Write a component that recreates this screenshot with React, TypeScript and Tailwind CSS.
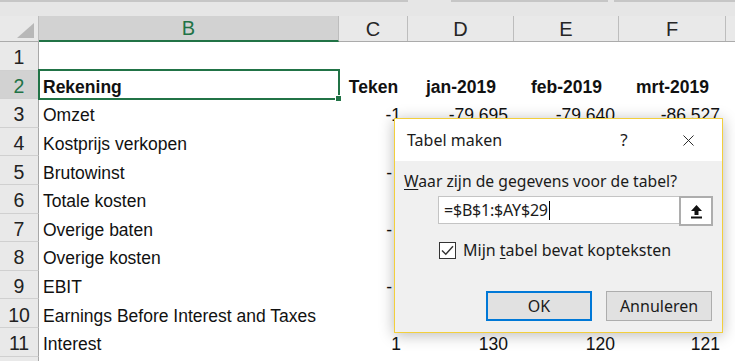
import { X } from 'lucide-react';

type RowData = {
  n: number;
  b: string;
  c?: string;
  d?: string;
  e?: string;
  f?: string;
  bold?: boolean;
};

// values under the dialog are left out: they cannot be seen anyway
const rows: RowData[] = [
  { n: 1, b: '' },
  { n: 2, b: 'Rekening', c: 'Teken', d: 'jan-2019', e: 'feb-2019', f: 'mrt-2019', bold: true },
  { n: 3, b: 'Omzet', c: '-1', d: '-79 695', e: '-79 640', f: '-86 527' },
  { n: 4, b: 'Kostprijs verkopen' },
  { n: 5, b: 'Brutowinst', c: '-' },
  { n: 6, b: 'Totale kosten' },
  { n: 7, b: 'Overige baten', c: '-' },
  { n: 8, b: 'Overige kosten' },
  { n: 9, b: 'EBIT', c: '-' },
  { n: 10, b: 'Earnings Before Interest and Taxes' },
  { n: 11, b: 'Interest', c: '1', d: '130', e: '120', f: '121' },
];

const headers = [
  { l: 'B', w: 'w-[300px]', sel: true },
  { l: 'C', w: 'w-[69px]' },
  { l: 'D', w: 'w-[106px]' },
  { l: 'E', w: 'w-[105px]' },
  { l: 'F', w: 'w-[107px]' },
];

function SheetRow({ r }: { r: RowData }) {
  const sel = r.n === 2;
  const dashOnly = r.c === '-';
  return (
    <div className="flex h-[28.6px] shrink-0">
      <div
        className={`w-[39px] shrink-0 flex items-center justify-center pt-[4px] border-b border-r border-b-[#d0d0d0] border-r-[#a8a8a8] text-[19.5px] ${
          sel ? 'bg-[#d2d2d2] text-[#217346]' : 'bg-[#e9e9e9] text-[#222]'
        }`}
      >
        {r.n}
      </div>
      <div className={`w-[300px] shrink-0 relative flex items-center pl-[4px] pt-[4px] text-[17.5px] text-[#111] ${r.bold ? 'font-bold' : ''}`}>
        {r.b}
        {sel && (
          <div className="absolute -left-[1px] -top-[2px] -right-[1px] -bottom-[1px] border-2 border-[#217346]">
            <div className="absolute -right-[4px] -bottom-[4px] w-[7px] h-[7px] bg-[#217346] border border-white" />
          </div>
        )}
      </div>
      <div
        className={`w-[69px] shrink-0 flex items-center pt-[4px] text-[17.5px] text-[#111] ${
          r.bold ? 'font-bold justify-center' : dashOnly ? 'justify-end pr-[16px]' : 'justify-end pr-[7px]'
        }`}
      >
        {r.c}
      </div>
      <div className={`w-[106px] shrink-0 flex items-center pt-[4px] text-[17.5px] text-[#111] ${r.bold ? 'font-bold justify-center' : 'justify-end pr-[6px]'}`}>
        {r.d}
      </div>
      <div className={`w-[105px] shrink-0 flex items-center pt-[4px] text-[17.5px] text-[#111] ${r.bold ? 'font-bold justify-center' : 'justify-end pr-[4px]'}`}>
        {r.e}
      </div>
      <div className={`w-[107px] shrink-0 flex items-center pt-[4px] text-[17.5px] text-[#111] ${r.bold ? 'font-bold justify-center' : 'justify-end pr-[6px]'}`}>
        {r.f}
      </div>
      <div className="flex-1" />
    </div>
  );
}

function TabelMaken() {
  return (
    <div className="absolute left-[394px] top-[118px] w-[329px] h-[215px] border border-[#f2cf3c] bg-[#f0f0f0] shadow-[0_2px_14px_rgba(0,0,0,0.28)] flex flex-col font-['Noto_Sans',sans-serif] text-[#1b1b1b]">
      {/* title bar */}
      <div className="h-[42px] bg-white flex items-center pl-[12px] shrink-0">
        <span className="text-[16px]">Tabel maken</span>
        <span className="ml-auto w-[20px] text-center text-[17px] mr-[45px]">?</span>
        <X className="w-[19px] h-[19px] mr-[24px] text-[#222]" strokeWidth={1.2} />
      </div>
      {/* body */}
      <div className="flex-1 flex flex-col pl-[9px] pr-[9px] pt-[9px]">
        <div className="text-[15.7px] leading-[22px]">
          <span className="underline underline-offset-2">W</span>aar zijn de gegevens voor de tabel?
        </div>
        <div className="ml-[34px] mt-[4px] h-[28px] flex border border-[#c4c4c4] bg-white">
          <div className="flex-1 flex items-center pl-[5px] text-[16px] tracking-[-0.2px]">
            =$B$1:$AY$29<span className="w-[1px] h-[19px] bg-black ml-[1px]" />
          </div>
          <div className="w-[30px] h-full border-2 border-[#adadad] bg-white flex items-center justify-center -mt-[1px] -mb-[1px] -mr-[1px] box-content">
            <svg width="13" height="15" viewBox="0 0 13 15">
              <path d="M6.5 1 L12 7 H8.5 V11 H4.5 V7 H1 Z" fill="#111" />
              <rect x="1" y="12.5" width="11" height="2" fill="#111" />
            </svg>
          </div>
        </div>
        <div className="flex items-center ml-[35px] mt-[14px]">
          <div className="w-[17px] h-[17px] border border-[#333] bg-white flex items-center justify-center">
            <svg width="13" height="11" viewBox="0 0 13 11">
              <path d="M1 5.5 L4.8 9.3 L12 1.3" stroke="#333" strokeWidth="1.4" fill="none" />
            </svg>
          </div>
          <span className="ml-[7px] text-[16px]">
            Mijn <span className="underline underline-offset-2">t</span>abel bevat kopteksten
          </span>
        </div>
        <div className="flex justify-end gap-[14px] mt-auto mb-[11px] pr-[1px]">
          <button className="w-[106px] h-[30px] bg-[#e1e1e1] border-2 border-[#0078d7] text-[16px]">OK</button>
          <button className="w-[106px] h-[30px] bg-[#e1e1e1] border border-[#adadad] text-[16px]">Annuleren</button>
        </div>
      </div>
    </div>
  );
}

export default function App() {
  return (
    <div className="w-[735px] h-[361px] overflow-hidden relative bg-white font-['Liberation_Sans',Arial,sans-serif] flex flex-col">
      {/* strip above the headers */}
      <div className="h-[16px] shrink-0 bg-[#e6e6e6] flex items-start">
        <div className="w-[408px] h-[2px] bg-[#c6c6c6]" />
        <div className="w-[43px]" />
        <div className="w-[157px] h-[2px] bg-[#c6c6c6]" />
        <div className="w-[6px]" />
        <div className="flex-1 h-[2px] bg-[#c6c6c6]" />
      </div>
      {/* column headers */}
      <div className="h-[26px] shrink-0 flex bg-[#e9e9e9] border-b border-[#ababab]">
        <div className="w-[39px] shrink-0 flex items-end justify-end pr-[4px] pb-[3px] border-r border-[#bdbdbd]">
          <svg width="17" height="15" viewBox="0 0 17 15">
            <path d="M17 0 V15 H0 Z" fill="#b8b8b8" />
          </svg>
        </div>
        {headers.map(h => (
          <div
            key={h.l}
            className={`${h.w} shrink-0 flex items-center justify-center text-[20px] border-r border-r-[#bdbdbd] ${
              h.sel ? 'bg-[#d2d2d2] text-[#217346] border-b-2 border-b-[#217346] -mb-[1px]' : 'text-[#262626]'
            }`}
          >
            {h.l}
          </div>
        ))}
        <div className="flex-1" />
      </div>
      {rows.map(r => (
        <SheetRow key={r.n} r={r} />
      ))}
      <div className="flex flex-1">
        <div className="w-[39px] shrink-0 bg-[#e9e9e9] border-r border-[#a8a8a8]" />
      </div>
      <TabelMaken />
    </div>
  );
}
